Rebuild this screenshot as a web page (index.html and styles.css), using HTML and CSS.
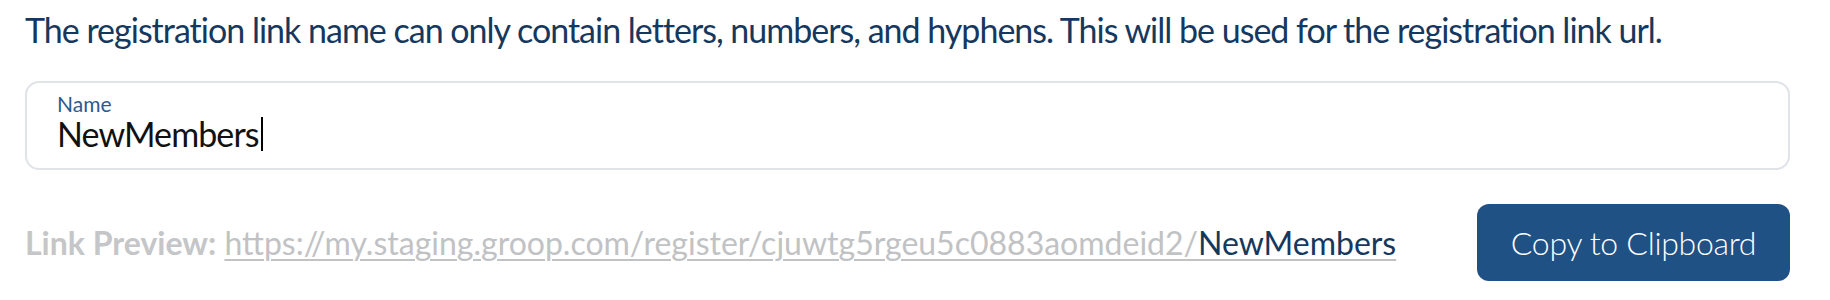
FILE: index.html
```html
<!DOCTYPE html>
<html lang="en">
<head>
<meta charset="utf-8">
<title>Registration link</title>
<link rel="stylesheet" href="styles.css">
</head>
<body>
<div class="page">
  <p class="intro">The registration link name can only contain letters, numbers, and hyphens. This will be used for the registration link url.</p>
  <div class="field">
    <label class="field-label" for="name">Name</label>
    <div class="field-value" id="name">NewMembers<span class="caret"></span></div>
  </div>
  <div class="preview-row">
    <p class="preview"><span class="preview-label">Link Preview:</span> <a class="preview-link" href="#">https://my.staging.groop.com/register/cjuwtg5rgeu5c0883aomdeid2/<span class="preview-name">NewMembers</span></a></p>
    <button class="copy-btn" type="button">Copy to Clipboard</button>
  </div>
</div>
</body>
</html>
```
FILE: styles.css
```css
html, body {
  margin: 0;
  padding: 0;
  background: #ffffff;
}

.page {
  font-family: Lato, "Open Sans", sans-serif;
  padding: 9px 40px 0 25px;
}

.intro {
  margin: 0;
  font-size: 34px;
  line-height: 41px;
  letter-spacing: -1px;
  color: #16385e;
}

.field {
  margin-top: 31px;
  border: 2px solid #e0e3e8;
  border-radius: 14px;
  padding: 11px 30px 14px 30px;
  display: flex;
  flex-direction: column;
}

.field-label {
  font-size: 21px;
  line-height: 20px;
  color: #2b5a91;
}

.field-value {
  font-size: 34px;
  line-height: 40px;
  letter-spacing: -0.9px;
  color: #111111;
  display: flex;
  align-items: center;
}

.caret {
  display: inline-block;
  width: 2px;
  height: 34px;
  background: #000000;
  margin-left: 2px;
}

.preview-row {
  margin-top: 34px;
  display: flex;
  align-items: center;
  justify-content: space-between;
}

.preview {
  margin: 0;
  font-size: 32px;
  line-height: 38px;
  color: #c5c6c8;
}

.preview-label {
  font-weight: 700;
}

.preview-link {
  color: #c1c2c4;
  text-decoration: underline;
  text-decoration-color: #c1c2c4;
  text-decoration-thickness: 2px;
  text-underline-offset: 4px;
}

.preview-name {
  color: #16385e;
}

.copy-btn {
  font-family: Lato, "Open Sans", sans-serif;
  font-size: 32px;
  font-weight: 300;
  letter-spacing: -0.3px;
  color: #ffffff;
  background: #1f5185;
  border: none;
  border-radius: 12px;
  width: 313px;
  height: 77px;
  padding: 0;
  cursor: pointer;
}
```
